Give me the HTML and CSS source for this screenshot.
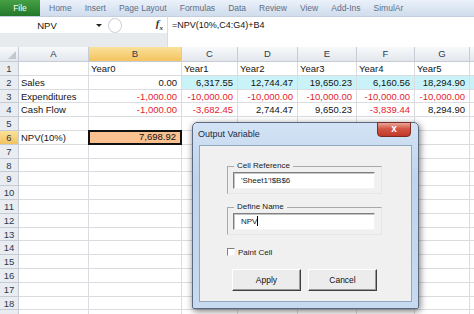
FILE: index.html
```html
<!DOCTYPE html>
<html lang="en">
<head>
  <meta charset="UTF-8">
  <meta name="viewport" content="width=device-width, initial-scale=1">
  <title>NPV - Excel</title>
  <link rel="stylesheet" href="styles.css">
</head>
<body>
  <div class="tabs">
    <span class="tab file">File</span>
    <span class="tab">Home</span>
    <span class="tab">Insert</span>
    <span class="tab">Page Layout</span>
    <span class="tab">Formulas</span>
    <span class="tab">Data</span>
    <span class="tab">Review</span>
    <span class="tab">View</span>
    <span class="tab">Add-Ins</span>
    <span class="tab">SimulAr</span>
  </div>

  <div class="fbar">
    <div class="fleft">
      <div class="namebox">
        <span class="nm">NPV</span>
        <span class="arrow"></span>
        <span class="circ"></span>
        <span class="fx">f<sub>x</sub></span>
      </div>
      <div class="fgray"></div>
    </div>
    <div class="formula">=NPV(10%,C4:G4)+B4</div>
  </div>

  <div class="sheet">
    <div class="row colhead">
      <span class="corner"></span><span>A</span><span class="on">B</span><span>C</span><span>D</span><span>E</span><span>F</span><span>G</span><span></span>
    </div>
    <div class="row">
      <span class="rh">1</span><span></span><span>Year0</span><span>Year1</span><span>Year2</span><span>Year3</span><span>Year4</span><span>Year5</span><span></span>
    </div>
    <div class="row">
      <span class="rh">2</span><span>Sales</span><span class="num">0.00</span><span class="num hl">6,317.55</span><span class="num hl">12,744.47</span><span class="num hl">19,650.23</span><span class="num hl">6,160.56</span><span class="num hl">18,294.90</span><span class="hl"></span>
    </div>
    <div class="row">
      <span class="rh">3</span><span>Expenditures</span><span class="num neg">-1,000.00</span><span class="num neg">-10,000.00</span><span class="num neg">-10,000.00</span><span class="num neg">-10,000.00</span><span class="num neg">-10,000.00</span><span class="num neg">-10,000.00</span><span></span>
    </div>
    <div class="row">
      <span class="rh">4</span><span>Cash Flow</span><span class="num neg">-1,000.00</span><span class="num neg">-3,682.45</span><span class="num">2,744.47</span><span class="num">9,650.23</span><span class="num neg">-3,839.44</span><span class="num">8,294.90</span><span></span>
    </div>
    <div class="row">
      <span class="rh">5</span><span></span><span></span><span></span><span></span><span></span><span></span><span></span><span></span>
    </div>
    <div class="row">
      <span class="rh on">6</span><span>NPV(10%)</span><span class="num active">7,698.92</span><span></span><span></span><span></span><span></span><span></span><span></span>
    </div>
    <div class="row"><span class="rh">7</span><span></span><span></span><span></span><span></span><span></span><span></span><span></span><span></span></div>
    <div class="row"><span class="rh">8</span><span></span><span></span><span></span><span></span><span></span><span></span><span></span><span></span></div>
    <div class="row"><span class="rh">9</span><span></span><span></span><span></span><span></span><span></span><span></span><span></span><span></span></div>
    <div class="row"><span class="rh">10</span><span></span><span></span><span></span><span></span><span></span><span></span><span></span><span></span></div>
    <div class="row"><span class="rh">11</span><span></span><span></span><span></span><span></span><span></span><span></span><span></span><span></span></div>
    <div class="row"><span class="rh">12</span><span></span><span></span><span></span><span></span><span></span><span></span><span></span><span></span></div>
    <div class="row"><span class="rh">13</span><span></span><span></span><span></span><span></span><span></span><span></span><span></span><span></span></div>
    <div class="row"><span class="rh">14</span><span></span><span></span><span></span><span></span><span></span><span></span><span></span><span></span></div>
    <div class="row"><span class="rh">15</span><span></span><span></span><span></span><span></span><span></span><span></span><span></span><span></span></div>
    <div class="row"><span class="rh">16</span><span></span><span></span><span></span><span></span><span></span><span></span><span></span><span></span></div>
    <div class="row"><span class="rh">17</span><span></span><span></span><span></span><span></span><span></span><span></span><span></span><span></span></div>
    <div class="row"><span class="rh">18</span><span></span><span></span><span></span><span></span><span></span><span></span><span></span><span></span></div>
    <div class="row"><span class="rh"></span><span></span><span></span><span></span><span></span><span></span><span></span><span></span><span></span></div>
  </div>

  <div class="dialog">
    <div class="titlebar">
      <span class="title">Output Variable</span>
      <span class="close">x</span>
    </div>
    <div class="client">
      <fieldset class="group">
        <legend>Cell Reference</legend>
        <div class="input">'Sheet1'!$B$6</div>
      </fieldset>
      <fieldset class="group second">
        <legend>Define Name</legend>
        <div class="input">NPV<span class="caret"></span></div>
      </fieldset>
      <label class="check"><span class="box"></span>Paint Cell</label>
      <div class="buttons">
        <button>Apply</button>
        <button>Cancel</button>
      </div>
    </div>
  </div>
</body>
</html>
```

FILE: styles.css
```css
body {
  margin: 0;
  width: 474px;
  height: 314px;
  overflow: hidden;
  position: relative;
  background: #fff;
  color: #141414;
  font-family: "Liberation Sans", Arial, sans-serif;
}

/* ribbon tabs */
.tabs {
  height: 16px;
  display: flex;
  align-items: center;
  gap: 13px;
  background: linear-gradient(#eaf1fa, #d0dcec);
  font-size: 8.5px;
  color: #5f6f86;
}
.tab.file {
  width: 40px;
  height: 16px;
  line-height: 16px;
  text-align: center;
  background: linear-gradient(#46a044, #22772a);
  color: #fff;
  margin-right: -4px;
}

/* formula bar */
.fbar { display: flex; height: 31px; }
.fleft { width: 167px; display: flex; flex-direction: column; }
.namebox {
  height: 16px;
  background: #fff;
  display: flex;
  align-items: center;
  border-top: 1px solid #c4cfdd;
}
.nm { width: 94px; text-align: center; font-size: 9.5px; }
.arrow {
  width: 0; height: 0;
  border-left: 3px solid transparent;
  border-right: 3px solid transparent;
  border-top: 3px solid #222;
  margin-left: 2px;
}
.circ {
  width: 12px; height: 13px;
  border-radius: 50%;
  border: 1px solid #cdd3db;
  margin-left: 6px;
}
.fx {
  margin-left: auto;
  margin-right: 4px;
  font-family: "Liberation Serif", serif;
  font-style: italic;
  font-weight: bold;
  font-size: 11px;
  color: #333;
}
.fx sub { font-size: 7px; }
.fgray { flex: 1; background: #e8ebee; }
.formula {
  flex: 1;
  background: #fff;
  border-top: 1px solid #c4cfdd;
  border-left: 1px solid #d8dde4;
  font-size: 9px;
  padding: 3px 0 0 4px;
}

/* sheet */
.sheet { height: 267px; overflow: hidden; }
.row {
  display: grid;
  grid-template-columns: 19px 70px 93px 56px 60px 59px 58px 55px 40px;
  height: 13.8px;
  font-size: 9.5px;
}
.row > span {
  border-right: 1px solid #dadcdf;
  border-bottom: 1px solid #dadcdf;
  padding: 0 2px;
  line-height: 13px;
  white-space: nowrap;
  overflow: hidden;
}
.colhead { height: 15px; }
.colhead > span {
  line-height: 14px;
  text-align: center;
  color: #2c3a50;
  background: linear-gradient(#f8f9fb, #e3e7ec);
  border-color: #c6ccd5;
}
.colhead > .on { background: linear-gradient(#fae19a, #f3c35e); }
.corner { position: relative; }
.corner::after {
  content: "";
  position: absolute;
  right: 2px; bottom: 2px;
  border-left: 8px solid transparent;
  border-bottom: 8px solid #c3c8d0;
}
.row > .rh {
  text-align: center;
  color: #2c3a50;
  background: #e9ecf0;
  border-color: #c6ccd5;
  padding: 0;
}
.row > .rh.on { background: linear-gradient(#fae19a, #f3c35e); }
.row > .num { text-align: right; padding-right: 4px; }
.neg { color: #e5222e; }
.hl { background: #c9f3f8; }
.row > .active {
  background: #fac08f;
  border: 2px solid #111;
  line-height: 10px;
  margin: -1px 0 0 -1px;
}

/* dialog */
.dialog {
  position: absolute;
  left: 192px;
  top: 122px;
  width: 227px;
  height: 187px;
  box-sizing: border-box;
  border: 1px solid #5b6a80;
  border-radius: 5px 5px 2px 2px;
  background: linear-gradient(#d3e3f5, #c0d4ec 30%, #c8daef);
  box-shadow: 1px 2px 7px rgba(0,0,0,0.55);
  padding: 0 6px 6px;
}
.titlebar {
  height: 22px;
  position: relative;
}
.title {
  position: absolute;
  left: -1px;
  top: 6px;
  font-size: 9px;
  color: #1b2944;
}
.close {
  position: absolute;
  right: 1px;
  top: -1px;
  width: 34px;
  height: 15px;
  box-sizing: border-box;
  border: 1px solid #7c2a24;
  border-radius: 0 0 4px 4px;
  background: linear-gradient(#e9a69c, #d35543 45%, #c0392b);
  color: #fff;
  font-weight: bold;
  font-size: 10px;
  text-align: center;
  line-height: 12px;
}
.client {
  height: 157px;
  box-sizing: border-box;
  background: #f0f0f0;
  border: 1px solid #92a6c2;
  padding: 15px 0 0 27px;
  font-size: 8px;
  color: #1a1a1a;
}
.group {
  width: 155px;
  box-sizing: border-box;
  margin: 0;
  padding: 0 6px 4px 5px;
  border: 1px solid #e6e6e6;
  border-top-color: #a9a9a9;
  border-left-color: #a9a9a9;
}
.group legend { padding: 0 3px; margin-left: 1px; line-height: 10px; }
.group.second { margin-top: 8px; }
.input {
  height: 17px;
  box-sizing: border-box;
  background: #fff;
  border: 1px solid;
  border-color: #7f7f7f #f4f4f4 #f4f4f4 #7f7f7f;
  box-shadow: inset 1px 1px #c4c4c4;
  padding: 0 0 0 7px;
  line-height: 15px;
  font-size: 8px;
  margin-top: 1px;
}
.caret {
  display: inline-block;
  width: 1px;
  height: 10px;
  background: #000;
  vertical-align: -2px;
}
.check {
  display: flex;
  align-items: center;
  gap: 3px;
  margin-top: 12px;
  height: 10px;
}
.box {
  width: 8px;
  height: 8px;
  box-sizing: border-box;
  background: #fff;
  border: 1px solid;
  border-color: #808080 #f4f4f4 #f4f4f4 #808080;
}
.buttons {
  display: flex;
  gap: 7px;
  margin: 12px 0 0 5px;
}
.buttons button {
  width: 69px;
  height: 22px;
  background: #ececec;
  border: 1px solid;
  border-color: #fff #404040 #404040 #fff;
  box-shadow: inset -1px -1px #9a9a9a;
  font-family: "Liberation Sans", Arial, sans-serif;
  font-size: 8.5px;
  color: #111;
  padding: 0;
}
```
